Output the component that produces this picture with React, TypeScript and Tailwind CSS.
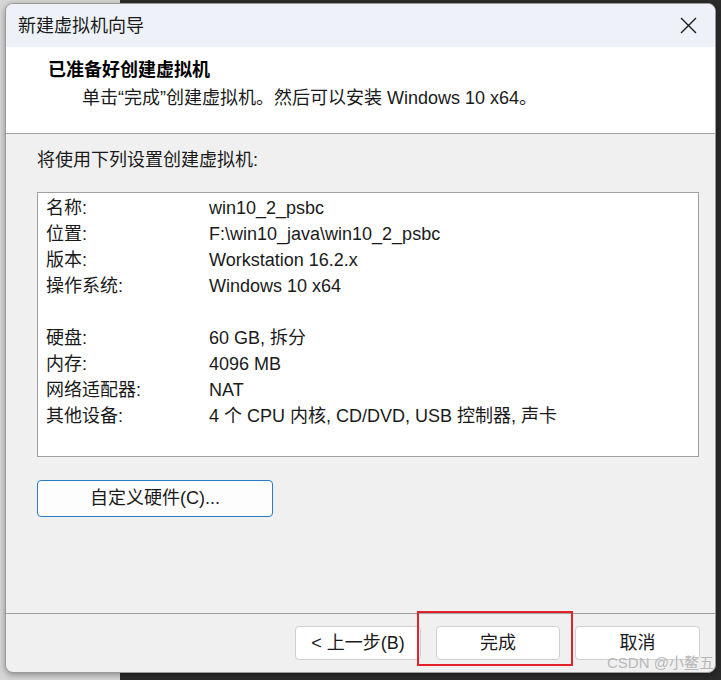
import React from "react";

const font = { fontFamily: '"Liberation Sans", "Noto Sans CJK SC", sans-serif' };

const rows: [string, string][] = [
  ["名称:", "win10_2_psbc"],
  ["位置:", "F:\\win10_java\\win10_2_psbc"],
  ["版本:", "Workstation 16.2.x"],
  ["操作系统:", "Windows 10 x64"],
  ["", ""],
  ["硬盘:", "60 GB, 拆分"],
  ["内存:", "4096 MB"],
  ["网络适配器:", "NAT"],
  ["其他设备:", "4 个 CPU 内核, CD/DVD, USB 控制器, 声卡"],
];

export default function App() {
  return (
    <div
      className="relative w-[721px] h-[680px] overflow-hidden bg-[linear-gradient(to_right,#d6d6d6_120px,#2b2b2b_120px)] pt-[3px] pl-[5px] text-black"
      style={font}
    >
      <div className="w-[711px] h-[670px] rounded-[8px] border border-[#9a9a9a] bg-[#f0f0f0] overflow-hidden flex flex-col shadow-[0_2px_6px_rgba(0,0,0,0.35)]">
        {/* title bar */}
        <div className="h-[43px] shrink-0 bg-[#eef2f8] flex items-center justify-between pl-[12px] pr-[16px]">
          <span className="text-[18px] leading-none text-[#1a1a1a]">新建虚拟机向导</span>
          <svg width="17" height="17" viewBox="0 0 17 17" className="mr-[2px]">
            <path d="M1 1 L16 16 M16 1 L1 16" stroke="#1a1a1a" strokeWidth="1.4" fill="none" />
          </svg>
        </div>
        {/* header */}
        <div className="h-[87px] shrink-0 bg-white border-b border-[#a0a0a0] pl-[42px] pt-[11px]">
          <div className="text-[18px] font-bold leading-[24px] text-black">已准备好创建虚拟机</div>
          <div className="text-[18px] leading-[24px] text-[#1a1a1a] pl-[34px] mt-[4px]">
            单击“完成”创建虚拟机。然后可以安装 Windows 10 x64。
          </div>
        </div>
        {/* body */}
        <div className="flex-1 flex flex-col pl-[31px] pr-[16px]">
          <div className="text-[18px] leading-[24px] mt-[14px] text-[#1a1a1a]">将使用下列设置创建虚拟机:</div>
          <div className="mt-[20px] h-[265px] border border-[#a0a0a0] bg-white pt-[2px] pl-[8px]">
            {rows.map(([k, v], i) => (
              <div key={i} className="flex h-[26px] items-center text-[18px] text-[#1a1a1a]">
                <span className="w-[163px] shrink-0">{k}</span>
                <span>{v}</span>
              </div>
            ))}
          </div>
          <button className="mt-[23px] w-[236px] h-[37px] rounded-[4px] border border-[#2a7bc6] bg-[#fdfdfd] text-[18px] text-[#1a1a1a]">
            自定义硬件(C)...
          </button>
        </div>
        {/* footer */}
        <div className="h-[59px] shrink-0 border-t border-[#a0a0a0] flex items-start justify-end gap-[15px] pt-[12px] pr-[15px]">
          <button className="w-[126px] h-[34px] rounded-[4px] border border-[#d0d0d0] bg-white text-[18px] text-[#1a1a1a]">
            &lt; 上一步(B)
          </button>
          <button className="w-[124px] h-[34px] rounded-[4px] border border-[#d0d0d0] bg-white text-[18px] text-[#1a1a1a]">
            完成
          </button>
          <button className="w-[125px] h-[34px] rounded-[4px] border border-[#d0d0d0] bg-white text-[18px] text-[#1a1a1a]">
            取消
          </button>
        </div>
      </div>
      {/* red highlight */}
      <div className="absolute left-[417px] top-[611px] w-[156px] h-[55px] border-2 border-[#e3222c]" />
      {/* watermark */}
      <div className="absolute left-[607px] top-[654px] text-[15px] leading-[18px] text-[#b0b0b0]/90 whitespace-nowrap">
        CSDN @小鳌五
      </div>
    </div>
  );
}
